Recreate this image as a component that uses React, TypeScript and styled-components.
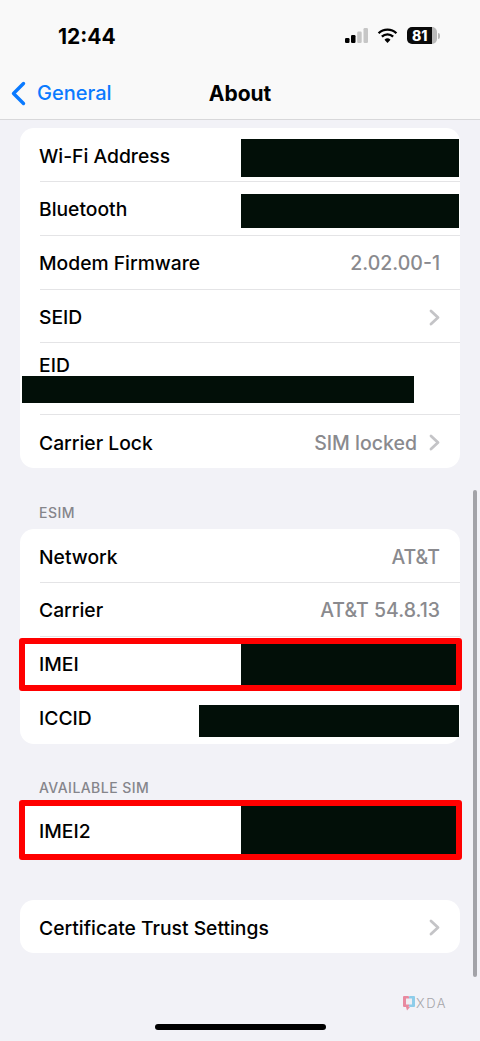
import React from 'react';
import styled, { createGlobalStyle } from 'styled-components';

const GlobalStyle = createGlobalStyle`
  html, body { margin: 0; padding: 0; }
  body {
    background: #f2f2f7;
    font-family: Inter, "Liberation Sans", sans-serif;
    -webkit-font-smoothing: antialiased;
  }
`;

const Screen = styled.div`
  position: relative;
  width: 480px;
  height: 1041px;
  overflow: hidden;
  background: #f2f2f7;
`;

const Header = styled.header`
  height: 120px;
  box-sizing: border-box;
  background: #f9f9f9;
  border-bottom: 1px solid #d8d8da;
`;

const StatusBar = styled.div`
  height: 71px;
  box-sizing: border-box;
  padding: 23px 40px 0 58px;
  display: flex;
  align-items: flex-start;
  justify-content: space-between;
`;

const Clock = styled.span`
  font-size: 21px;
  line-height: 28px;
  font-weight: 700;
  color: #000;
`;

const StatusIcons = styled.div`
  display: flex;
  align-items: center;
  gap: 9px;
  padding-top: 4px;
`;

const BatteryBody = styled.div`
  width: 30px;
  height: 17px;
  border-radius: 5px;
  overflow: hidden;
  background: linear-gradient(90deg, #0a0a0a 0 82%, #b9b9b9 82% 100%);
  color: #fff;
  font-size: 14px;
  line-height: 17px;
  font-weight: 800;
  padding-left: 5px;
  box-sizing: border-box;
`;

const Battery = styled.div`
  display: flex;
  align-items: center;
  gap: 1px;
`;

const BatteryCap = styled.div`
  width: 2px;
  height: 6px;
  border-radius: 0 2px 2px 0;
  background: #b9b9b9;
`;

const NavBar = styled.nav`
  display: grid;
  grid-template-columns: 1fr auto 1fr;
  align-items: center;
  height: 44px;
  padding: 0 11px;
`;

const BackLink = styled.a`
  display: flex;
  align-items: center;
  gap: 11px;
  color: #0a7aff;
  font-size: 20px;
  font-weight: 500;
`;

const Title = styled.h1`
  margin: 0;
  font-size: 21px;
  font-weight: 700;
  color: #000;
`;

const Content = styled.main`
  padding: 8px 20px 0;
`;

const Card = styled.section<{ $gap?: number }>`
  background: #fff;
  border-radius: 14px;
  margin-top: ${(p) => p.$gap ?? 0}px;
`;

const SectionLabel = styled.div<{ $top: number; $bottom: number }>`
  margin: ${(p) => p.$top}px 0 ${(p) => p.$bottom}px 19px;
  font-size: 14px;
  line-height: 20px;
  font-weight: 500;
  letter-spacing: 0.45px;
  color: #85858b;
`;

const Row = styled.div<{ $height?: number; $last?: boolean; $tight?: boolean }>`
  position: relative;
  height: ${(p) => p.$height ?? 54}px;
  box-sizing: border-box;
  margin-left: 20px;
  padding: ${(p) => (p.$tight ? 0 : 2)}px 20px 0 0;
  display: flex;
  align-items: center;
  justify-content: space-between;
  border-bottom: ${(p) => (p.$last ? 'none' : '1px solid #e4e4e6')};
`;

const EidRow = styled(Row)`
  align-items: flex-start;
  padding-top: 9px;
`;

const Label = styled.span`
  margin-left: -1px;
  font-size: 19.3px;
  line-height: 26px;
  font-weight: 500;
  color: #000;
`;

const Value = styled.span`
  display: flex;
  align-items: center;
  gap: 12px;
  font-size: 19.5px;
  line-height: 26px;
  font-weight: 500;
  color: #8a8a8e;
`;

// black bars painted over private values in the screenshot
const Redaction = styled.div<{ $top: number; $left: number; $width: number; $height: number }>`
  position: absolute;
  top: ${(p) => p.$top}px;
  left: ${(p) => p.$left}px;
  width: ${(p) => p.$width}px;
  height: ${(p) => p.$height}px;
  background: #020f08;
`;

const Highlight = styled.div<{ $top: number; $height: number }>`
  position: absolute;
  top: ${(p) => p.$top}px;
  left: -21px;
  width: 443px;
  height: ${(p) => p.$height}px;
  box-sizing: border-box;
  border: 6px solid #ff0000;
  border-radius: 3px;
`;

const ScrollBar = styled.div`
  position: absolute;
  top: 490px;
  left: 473px;
  width: 4px;
  height: 487px;
  border-radius: 2px;
  background: #a3a3a8;
`;

const Watermark = styled.div`
  position: absolute;
  top: 995px;
  left: 403px;
  display: flex;
  align-items: center;
  gap: 1px;
`;

const WatermarkText = styled.span`
  font-size: 13px;
  line-height: 15px;
  font-weight: 300;
  letter-spacing: 1.6px;
  color: #a6a6aa;
`;

const HomeIndicator = styled.div`
  position: absolute;
  top: 1024px;
  left: 155px;
  width: 171px;
  height: 6px;
  border-radius: 3px;
  background: #000;
`;

const Chevron = () => (
  <svg width="11" height="17" viewBox="0 0 11 17" fill="none">
    <path d="M2 2l7 6.5L2 15" stroke="#c4c4c7" strokeWidth="2.8" strokeLinecap="round" strokeLinejoin="round" />
  </svg>
);

const BackChevron = () => (
  <svg width="15" height="25" viewBox="0 0 15 25" fill="none">
    <path d="M12.5 2.5L2.5 12.5l10 10" stroke="#0a7aff" strokeWidth="3.4" strokeLinecap="round" strokeLinejoin="round" />
  </svg>
);

const Signal = () => (
  <svg width="23" height="15" viewBox="0 0 23 15">
    <rect x="0" y="10" width="4.5" height="5" rx="1.2" fill="#000" />
    <rect x="6" y="7" width="4.5" height="8" rx="1.2" fill="#000" />
    <rect x="12.2" y="3.5" width="4.5" height="11.5" rx="1.2" fill="#c6c6c6" />
    <rect x="18.5" y="0" width="4.5" height="15" rx="1.2" fill="#c6c6c6" />
  </svg>
);

const Wifi = () => (
  <svg width="21" height="15" viewBox="0 0 22 16" fill="none">
    <path d="M1.5 5.6a13.6 13.6 0 0 1 19 0" stroke="#000" strokeWidth="2.5" />
    <path d="M5 9.2a8.6 8.6 0 0 1 12 0" stroke="#000" strokeWidth="2.5" />
    <path d="M11 16l-3.2-3.4a4.6 4.6 0 0 1 6.4 0z" fill="#000" />
  </svg>
);

const XdaMark = () => (
  <svg width="12" height="16" viewBox="0 0 12 16">
    <rect x="0" y="1" width="6" height="11" rx="1" fill="#e88aa0" />
    <rect x="6" y="1" width="6" height="11" rx="1" fill="#8ecdea" />
    <rect x="3" y="3.5" width="6" height="6" fill="#eeeef3" />
    <path d="M3 12h4l-3 3.5z" fill="#e88aa0" />
  </svg>
);

export default function App() {
  return (
    <Screen>
      <GlobalStyle />
      <Header>
        <StatusBar>
          <Clock>12:44</Clock>
          <StatusIcons>
            <Signal />
            <Wifi />
            <Battery>
              <BatteryBody>81</BatteryBody>
              <BatteryCap />
            </Battery>
          </StatusIcons>
        </StatusBar>
        <NavBar>
          <BackLink>
            <BackChevron />
            General
          </BackLink>
          <Title>About</Title>
        </NavBar>
      </Header>

      <Content>
        <Card>
          <Row>
            <Label>Wi-Fi Address</Label>
            <Redaction $top={11} $left={201} $width={218} $height={38} />
          </Row>
          <Row $tight>
            <Label>Bluetooth</Label>
            <Redaction $top={12} $left={201} $width={218} $height={34} />
          </Row>
          <Row $tight>
            <Label>Modem Firmware</Label>
            <Value>2.02.00-1</Value>
          </Row>
          <Row $height={53}>
            <Label>SEID</Label>
            <Value>
              <Chevron />
            </Value>
          </Row>
          <EidRow $height={72}>
            <Label>EID</Label>
            <Redaction $top={33} $left={-18} $width={392} $height={27} />
          </EidRow>
          <Row $height={53} $last>
            <Label>Carrier Lock</Label>
            <Value>
              SIM locked
              <Chevron />
            </Value>
          </Row>
        </Card>

        <SectionLabel $top={35} $bottom={6}>ESIM</SectionLabel>
        <Card>
          <Row>
            <Label>Network</Label>
            <Value>AT&amp;T</Value>
          </Row>
          <Row $tight>
            <Label>Carrier</Label>
            <Value>AT&amp;T 54.8.13</Value>
          </Row>
          <Row $tight>
            <Label>IMEI</Label>
            <Redaction $top={7} $left={201} $width={216} $height={41} />
            <Highlight $top={1} $height={53} />
          </Row>
          <Row $height={53} $last $tight>
            <Label>ICCID</Label>
            <Redaction $top={14} $left={159} $width={260} $height={32} />
          </Row>
        </Card>

        <SectionLabel $top={34} $bottom={2}>AVAILABLE SIM</SectionLabel>
        <Card>
          <Row $height={60} $last>
            <Label>IMEI2</Label>
            <Redaction $top={6} $left={201} $width={216} $height={48} />
            <Highlight $top={0} $height={60} />
          </Row>
        </Card>

        <Card $gap={40}>
          <Row $height={53} $last>
            <Label>Certificate Trust Settings</Label>
            <Value>
              <Chevron />
            </Value>
          </Row>
        </Card>
      </Content>

      <ScrollBar />
      <Watermark>
        <XdaMark />
        <WatermarkText>XDA</WatermarkText>
      </Watermark>
      <HomeIndicator />
    </Screen>
  );
}
